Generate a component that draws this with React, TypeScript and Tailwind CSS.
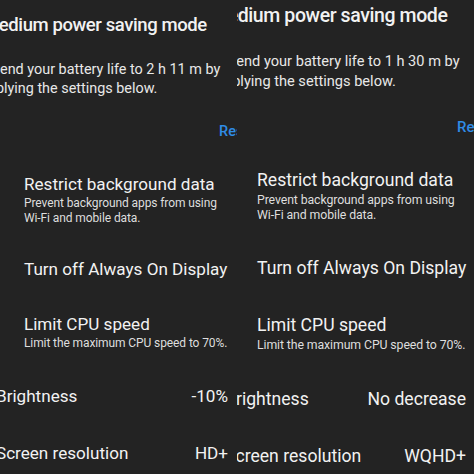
import React from 'react';

type PanelProps = {
  time: string;
  brightness: string;
  resolution: string;
  s: {
    wrap: string;
    title: string;
    body: string;
    reset: string;
    item: string;
    itemTitle: string;
    itemDesc: string;
    gap: string;
    rowGap1: string;
    rowGap2: string;
    row: string;
    rowText: string;
  };
};

function Panel({ time, brightness, resolution, s }: PanelProps) {
  return (
    <div className="w-[237px] h-[474px] shrink-0 overflow-hidden bg-[#232323] text-[#f2f2f2]">
      <div className={s.wrap}>
        <h1 className={s.title}>Medium power saving mode</h1>
        <p className={s.body}>
          Extend your battery life to {time} by
          <br />
          applying the settings below.
        </p>
        <div className={s.reset}>Reset</div>

        <div className={s.item}>
          <div className={s.itemTitle}>Restrict background data</div>
          <div className={s.itemDesc}>
            Prevent background apps from using
            <br />
            Wi-Fi and mobile data.
          </div>
        </div>
        <div className={`${s.item} ${s.gap}`}>
          <div className={s.itemTitle}>Turn off Always On Display</div>
        </div>
        <div className={`${s.item} ${s.gap}`}>
          <div className={s.itemTitle}>Limit CPU speed</div>
          <div className={s.itemDesc}>Limit the maximum CPU speed to 70%.</div>
        </div>

        <div className={`${s.row} ${s.rowGap1}`}>
          <span className={s.rowText}>Brightness</span>
          <span className={s.rowText}>{brightness}</span>
        </div>
        <div className={`${s.row} ${s.rowGap2}`}>
          <span className={s.rowText}>Screen resolution</span>
          <span className={s.rowText}>{resolution}</span>
        </div>
      </div>
    </div>
  );
}

export default function App() {
  return (
    <div className="flex w-[474px] h-[474px] overflow-hidden bg-[#232323] font-['Roboto',sans-serif]">
      <Panel
        time="2 h 11 m"
        brightness="-10%"
        resolution="HD+"
        s={{
          wrap: 'pt-[13px]',
          title: 'ml-[-17px] whitespace-nowrap text-[18.5px] leading-[24px] tracking-[-0.4px] font-medium',
          body: 'ml-[-20px] mt-[23px] whitespace-nowrap text-[14.4px] leading-[19px] text-[#e8e8e8]',
          reset: 'ml-[219px] mt-[25px] whitespace-nowrap text-[14.5px] leading-[18px] font-medium text-[#2f8ce6]',
          item: 'pl-[24px] pr-[9px] mt-[32px]',
          itemTitle: 'whitespace-nowrap text-[17.1px] leading-[22px]',
          itemDesc: 'mt-[1px] whitespace-nowrap text-[12px] leading-[14.5px] tracking-[-0.1px] text-[#dedede]',
          gap: '!mt-[33px]',
          rowGap1: 'mt-[34px]',
          rowGap2: 'mt-[35px]',
          row: 'ml-[-4px] mr-[9px] flex justify-between',
          rowText: 'whitespace-nowrap text-[17.1px] leading-[22px]',
        }}
      />
      <Panel
        time="1 h 30 m"
        brightness="No decrease"
        resolution="WQHD+"
        s={{
          wrap: 'pt-[4px]',
          title: 'ml-[-26px] whitespace-nowrap text-[19.5px] leading-[24px] tracking-[-0.4px] font-medium',
          body: 'ml-[-21px] mt-[23px] whitespace-nowrap text-[14.6px] leading-[20px] text-[#e8e8e8]',
          reset: 'ml-[220px] mt-[27px] whitespace-nowrap text-[15px] leading-[18px] font-medium text-[#2f8ce6]',
          item: 'pl-[20px] pr-[8px] mt-[33px]',
          itemTitle: 'whitespace-nowrap text-[17.6px] leading-[22px]',
          itemDesc: 'mt-[2px] whitespace-nowrap text-[12.3px] leading-[14.5px] tracking-[-0.1px] text-[#dedede]',
          gap: '!mt-[35px]',
          rowGap1: 'mt-[35px]',
          rowGap2: 'mt-[35px]',
          row: 'ml-[-12px] mr-[8px] flex justify-between',
          rowText: 'whitespace-nowrap text-[17.6px] leading-[22px]',
        }}
      />
    </div>
  );
}
